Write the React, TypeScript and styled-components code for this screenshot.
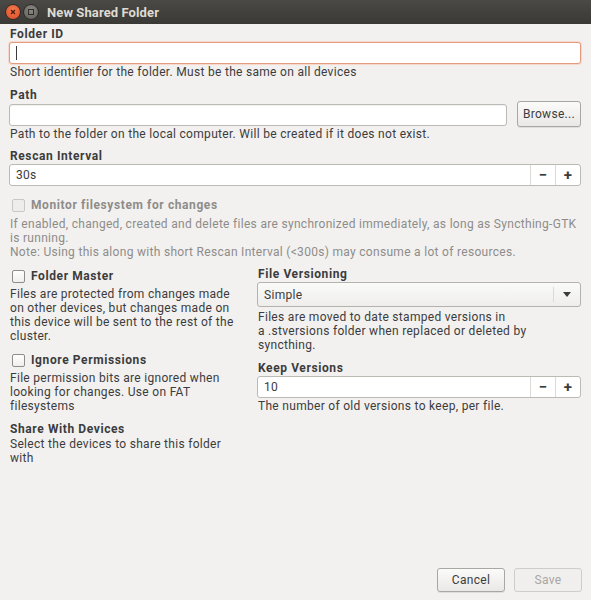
import React from 'react'
import styled, { createGlobalStyle } from 'styled-components'

const GlobalStyle = createGlobalStyle`
  html, body {
    margin: 0;
    padding: 0;
    background: #f2f1f0;
  }
  body {
    font-family: Roboto, 'Open Sans', sans-serif;
    font-size: 12px;
    letter-spacing: 0.3px;
    color: #3c3c3c;
  }
`

const Dialog = styled.div`
  width: 591px;
  height: 600px;
  display: flex;
  flex-flow: column nowrap;
  background: #f2f1f0;
`

const TitleBar = styled.div`
  height: 24px;
  flex: none;
  display: flex;
  align-items: center;
  padding-left: 5px;
  gap: 2px;
  background: linear-gradient(#4a4945, #3a3935);
  color: #dfdbd2;
  font-weight: bold;
  font-size: 13px;
  letter-spacing: 0.1px;
`

const WinButton = styled.div<{ $close?: boolean }>`
  width: 14px;
  height: 14px;
  border-radius: 50%;
  display: flex;
  align-items: center;
  justify-content: center;
  background: ${(p) =>
    p.$close
      ? 'radial-gradient(circle at 50% 35%, #f57a4f, #d84a24)'
      : 'radial-gradient(circle at 50% 35%, #8a8983, #5c5b57)'};
  border: 1px solid #2e2d2a;
`

const Title = styled.span`
  margin-left: 6px;
`

const Body = styled.div`
  flex: 1;
  display: flex;
  flex-flow: column nowrap;
  padding: 3px 10px 0 10px;
`

const Label = styled.div`
  font-weight: bold;
  letter-spacing: 0.6px;
  line-height: 14px;
  height: 14px;
  color: #3c3c3c;
`

const Help = styled.div<{ $disabled?: boolean }>`
  line-height: 14px;
  margin-top: 1px;
  color: ${(p) => (p.$disabled ? '#8e8c89' : '#3c3c3c')};
`

const Field = styled.div<{ $gap?: number }>`
  margin-bottom: ${(p) => p.$gap ?? 9}px;
`

const Row = styled.div`
  display: flex;
  align-items: center;
  gap: 10px;
  margin: 1px 0 1px -1px;
`

const Entry = styled.div<{ $focus?: boolean }>`
  flex: 1;
  height: 20px;
  display: flex;
  align-items: center;
  border: 1px solid ${(p) => (p.$focus ? '#e59a80' : '#bcbab5')};
  box-shadow: ${(p) => (p.$focus ? '0 0 0 1px #f6d9cc' : 'inset 0 1px 1px rgba(0,0,0,0.06)')};
  border-radius: 3px;
  background: #ffffff;
  padding-left: 6px;
  color: #3c3c3c;
`

const Caret = styled.div`
  width: 1px;
  height: 14px;
  background: #3c3c3c;
`

const Button = styled.button<{ $disabled?: boolean }>`
  height: 26px;
  margin: -2px 0 -1px;
  padding: 0 5px;
  font-family: inherit;
  font-size: 12px;
  letter-spacing: 0.3px;
  color: ${(p) => (p.$disabled ? '#a8a6a2' : '#3c3c3c')};
  border: 1px solid ${(p) => (p.$disabled ? '#cfcdc9' : '#a9a7a3')};
  border-radius: 3px;
  background: ${(p) => (p.$disabled ? '#f0efee' : 'linear-gradient(#fbfbfa, #e9e8e6)')};
  box-shadow: ${(p) => (p.$disabled ? 'none' : '0 1px 0 rgba(0,0,0,0.08)')};
`

const FooterButton = styled(Button)`
  width: 68px;
  height: 24px;
  margin: 0;
`

const Spin = styled.div`
  flex: 1;
  height: 20px;
  display: flex;
  border: 1px solid #bcbab5;
  border-radius: 3px;
  background: #ffffff;
  overflow: hidden;
`

const SpinText = styled.div`
  flex: 1;
  display: flex;
  align-items: center;
  padding-left: 6px;
`

const SpinButton = styled.div`
  width: 24px;
  display: flex;
  align-items: center;
  justify-content: center;
  border-left: 1px solid #dcdad6;
  font-size: 15px;
  font-weight: bold;
  color: #3c3c3c;
`

const Combo = styled.div`
  flex: 1;
  height: 23px;
  margin-bottom: 2px;
  display: flex;
  border: 1px solid #b4b2ad;
  border-radius: 3px;
  background: linear-gradient(#fafaf9, #efeeec);
`

const ComboText = styled.div`
  flex: 1;
  display: flex;
  align-items: center;
  padding-left: 6px;
`

const ComboArrow = styled.div`
  width: 26px;
  display: flex;
  align-items: center;
  justify-content: center;
  border-left: 1px solid #dcdad6;
  margin: 4px 0;
`

const CheckRow = styled.div<{ $disabled?: boolean }>`
  display: flex;
  align-items: center;
  gap: 6px;
  font-weight: bold;
  letter-spacing: 0.6px;
  line-height: 14px;
  margin-left: 2px;
  margin-bottom: 4px;
  color: ${(p) => (p.$disabled ? '#8e8c89' : '#3c3c3c')};
`

const Box = styled.div<{ $disabled?: boolean }>`
  width: 11px;
  height: 11px;
  border: 1px solid ${(p) => (p.$disabled ? '#c9c7c3' : '#8f8d89')};
  border-radius: 2px;
  background: ${(p) => (p.$disabled ? '#eeedeb' : 'linear-gradient(#ffffff, #f0efed)')};
`

const Columns = styled.div`
  display: grid;
  grid-template-columns: 238px 1fr;
  gap: 10px;
  margin-top: 10px;
`

const Column = styled.div<{ $shift?: number }>`
  display: flex;
  flex-flow: column nowrap;
  margin-top: ${(p) => p.$shift ?? 0}px;
`

const Footer = styled.div`
  margin-top: auto;
  display: flex;
  justify-content: flex-end;
  gap: 9px;
  padding: 0 9px 8px 0;
`

function SpinBox({ value }: { value: string }) {
  return (
    <Spin>
      <SpinText>{value}</SpinText>
      <SpinButton>−</SpinButton>
      <SpinButton>+</SpinButton>
    </Spin>
  )
}

export default function App(): React.ReactElement {
  return (
    <Dialog>
      <GlobalStyle />
      <TitleBar>
        <WinButton $close>
          <svg width="6" height="6" viewBox="0 0 6 6">
            <path d="M1 1L5 5M5 1L1 5" stroke="#4a1a0a" strokeWidth="1.3" />
          </svg>
        </WinButton>
        <WinButton>
          <svg width="6" height="6" viewBox="0 0 6 6">
            <rect x="0.5" y="0.5" width="5" height="5" fill="none" stroke="#2e2d2a" strokeWidth="1" />
          </svg>
        </WinButton>
        <Title>New Shared Folder</Title>
      </TitleBar>
      <Body>
        <Field>
          <Label>Folder ID</Label>
          <Row>
            <Entry $focus>
              <Caret />
            </Entry>
          </Row>
          <Help>Short identifier for the folder. Must be the same on all devices</Help>
        </Field>
        <Field $gap={8}>
          <Label>Path</Label>
          <Row>
            <Entry />
            <Button>Browse...</Button>
          </Row>
          <Help>Path to the folder on the local computer. Will be created if it does not exist.</Help>
        </Field>
        <Field $gap={11}>
          <Label>Rescan Interval</Label>
          <Row>
            <SpinBox value="30s" />
          </Row>
        </Field>
        <CheckRow $disabled>
          <Box $disabled />
          Monitor filesystem for changes
        </CheckRow>
        <Help $disabled>
          If enabled, changed, created and delete files are synchronized immediately, as long as Syncthing-GTK
          <br />
          is running.
          <br />
          Note: Using this along with short Rescan Interval (&lt;300s) may consume a lot of resources.
        </Help>
        <Columns>
          <Column>
            <Field $gap={10}>
              <CheckRow>
                <Box />
                Folder Master
              </CheckRow>
              <Help>
                Files are protected from changes made
                <br />
                on other devices, but changes made on
                <br />
                this device will be sent to the rest of the
                <br />
                cluster.
              </Help>
            </Field>
            <Field>
              <CheckRow>
                <Box />
                Ignore Permissions
              </CheckRow>
              <Help>
                File permission bits are ignored when
                <br />
                looking for changes. Use on FAT
                <br />
                filesystems
              </Help>
            </Field>
            <Field>
              <Label>Share With Devices</Label>
              <Help>
                Select the devices to share this folder
                <br />
                with
              </Help>
            </Field>
          </Column>
          <Column $shift={-2}>
            <Field>
              <Label>File Versioning</Label>
              <Row>
                <Combo>
                  <ComboText>Simple</ComboText>
                  <ComboArrow>
                    <svg width="8" height="5" viewBox="0 0 8 5">
                      <path d="M0 0H8L4 5Z" fill="#3c3c3c" />
                    </svg>
                  </ComboArrow>
                </Combo>
              </Row>
              <Help>
                Files are moved to date stamped versions in
                <br />
                a .stversions folder when replaced or deleted by
                <br />
                syncthing.
              </Help>
            </Field>
            <Field>
              <Label>Keep Versions</Label>
              <Row>
                <SpinBox value="10" />
              </Row>
              <Help>The number of old versions to keep, per file.</Help>
            </Field>
          </Column>
        </Columns>
      </Body>
      <Footer>
        <FooterButton>Cancel</FooterButton>
        <FooterButton $disabled>Save</FooterButton>
      </Footer>
    </Dialog>
  )
}
